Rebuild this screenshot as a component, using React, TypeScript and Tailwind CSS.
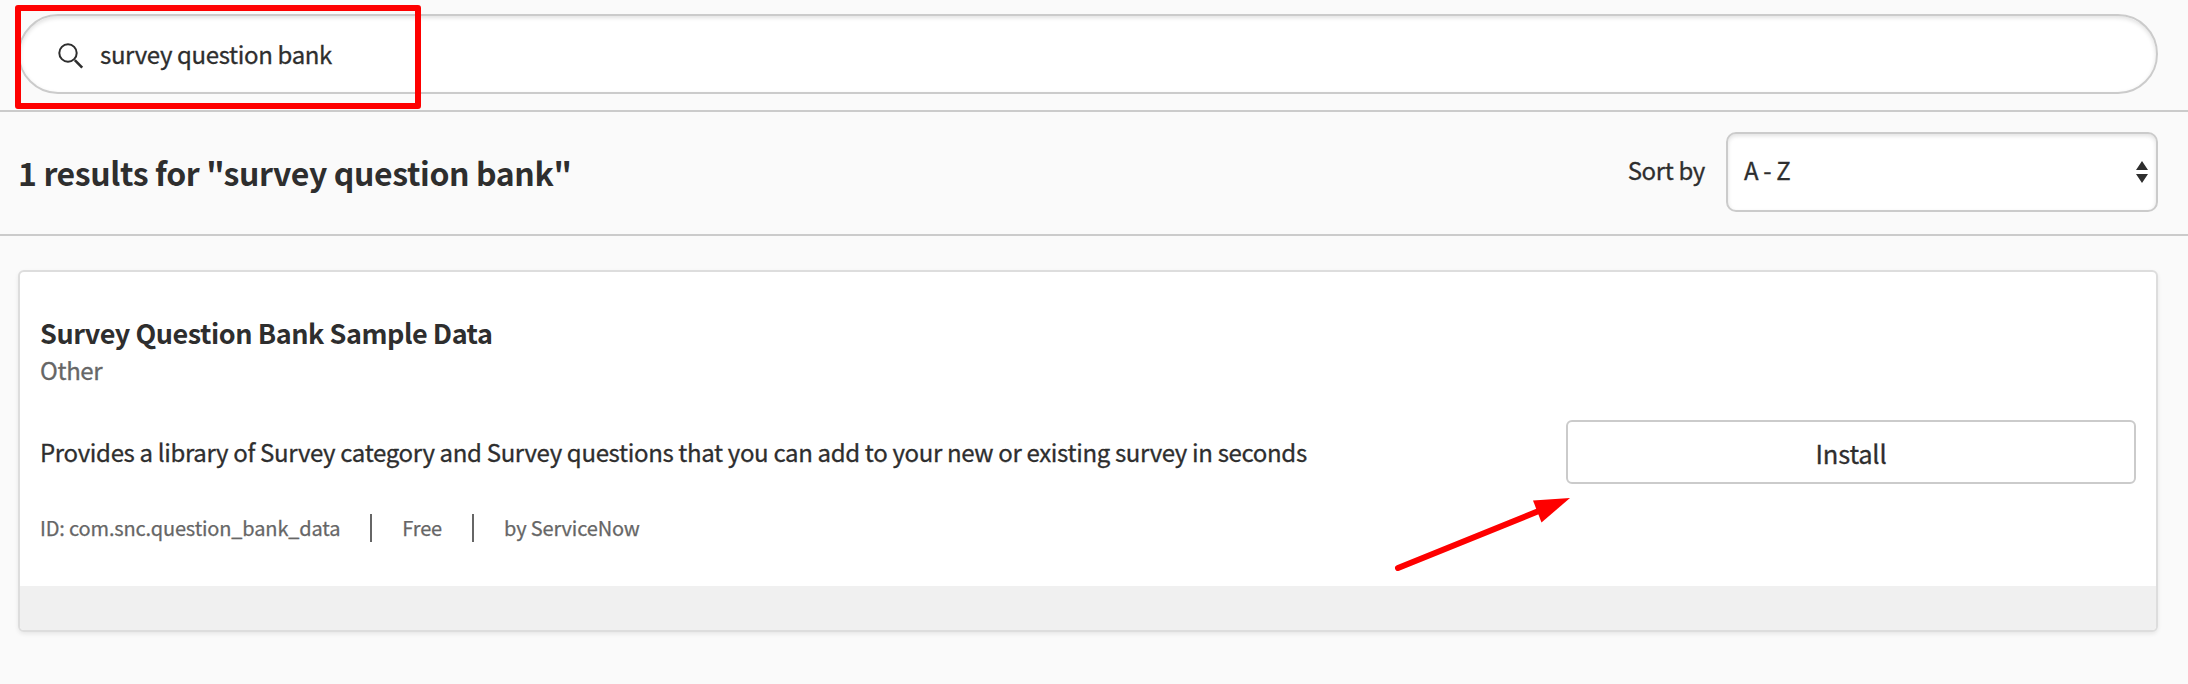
import { useState } from 'react'

interface Plugin {
  id: string
  name: string
  category: string
  description: string
  price: string
  vendor: string
}

const plugins: Plugin[] = [
  {
    id: 'com.snc.question_bank_data',
    name: 'Survey Question Bank Sample Data',
    category: 'Other',
    description: 'Provides a library of Survey category and Survey questions that you can add to your new or existing survey in seconds',
    price: 'Free',
    vendor: 'ServiceNow',
  },
]

function SearchIcon() {
  return (
    <svg className="mt-1 w-[26px] h-[26px] shrink-0" viewBox="0 0 26 26" fill="none" stroke="#2e2e2e">
      <circle cx="10" cy="10" r="8.7" strokeWidth="2" />
      <path d="M16.8 17.2 24.2 24.6" strokeWidth="2.6" />
    </svg>
  )
}

function PluginCard({ plugin }: { plugin: Plugin }) {
  return (
    <div className="relative ml-[18px] mr-[30px] mt-[34px] rounded-md border-2 border-[#dddddd] bg-white shadow-[0_2px_4px_rgba(0,0,0,0.08)]">
      <div className="h-[314px] pl-5 pr-5 pt-10">
        <h2 className="text-[27px] leading-[41px] tracking-[-0.46px] font-bold">{plugin.name}</h2>
        <p className="-mt-px text-[24px] leading-[36px] tracking-[-0.35px] text-[#666666] [-webkit-text-stroke:0.3px]">{plugin.category}</p>
        <div className="mt-8 flex h-16 items-center justify-between">
          <p className="text-[24px] leading-[36px] tracking-[-0.34px] whitespace-nowrap [-webkit-text-stroke:0.3px]">{plugin.description}</p>
          <button className="h-16 w-[570px] rounded-md border-2 border-[#cbcbcb] bg-white pt-0.5 text-[25.5px] leading-[36px] tracking-[-0.2px] [-webkit-text-stroke:0.3px]">
            Install
          </button>
        </div>
        <div className="mt-[30px] flex h-7 items-center text-[20px] leading-[28px] tracking-[-0.16px] text-[#666666] [-webkit-text-stroke:0.25px]">
          <span>ID: {plugin.id}</span>
          <span className="mx-[30px] h-7 w-0.5 bg-[#666666]" />
          <span>{plugin.price}</span>
          <span className="mx-[30px] h-7 w-0.5 bg-[#666666]" />
          <span>by {plugin.vendor}</span>
        </div>
      </div>
      <div className="h-11 rounded-b bg-[#f0f0f0]" />
      {/* Pointer to the install button */}
      <svg className="absolute left-[1370px] top-[218px] h-[90px] w-[190px]" viewBox="1390 490 190 90">
        <path d="M1398 568 1540 510.500" stroke="#fe0000" strokeWidth="6" strokeLinecap="round" />
        <path d="M1570 498 1533 500.500 1541.500 522.500Z" fill="#fe0000" />
      </svg>
    </div>
  )
}

export default function App() {
  const [query, setQuery] = useState('survey question bank')

  return (
    <div className="h-[684px] w-[2188px] overflow-hidden bg-[#fafafa] font-['Noto_Sans_CJK_SC','Noto_Sans',sans-serif] text-[#2e2e2e]">
      <header className="relative h-28 border-b-2 border-[#cbcbcb] pl-[18px] pr-[30px] pt-3.5">
        <div className="flex h-20 items-center rounded-full border-2 border-[#cbcbcb] bg-white pl-[38px] shadow-[inset_0_2px_4px_rgba(0,0,0,0.12)]">
          <SearchIcon />
          <input
            value={query}
            onChange={e => setQuery(e.target.value)}
            className="mb-0.5 ml-4 h-10 flex-1 bg-transparent text-[24px] tracking-[-0.35px] outline-none [-webkit-text-stroke:0.3px]"
          />
        </div>
        {/* Search highlight */}
        <div className="absolute left-[15px] top-[5px] h-[104px] w-[406px] rounded-[3px] border-[6px] border-[#fe0000]" />
      </header>

      <section className="flex h-[124px] items-start justify-between border-b-2 border-[#cbcbcb] pl-[18px] pr-[30px] pt-5">
        <h1 className="text-[32px] leading-[81px] tracking-[-0.38px] font-bold">
          {plugins.length} results for "{query}"
        </h1>
        <div className="flex">
          <span className="mr-[21px] text-[24px] leading-[76px] tracking-[-0.35px] [-webkit-text-stroke:0.3px]">Sort by</span>
          <div className="flex h-20 w-[432px] items-start justify-between rounded-[10px] border-2 border-[#cbcbcb] bg-white pl-4 pr-2 shadow-[inset_0_2px_4px_rgba(0,0,0,0.12)]">
            <span className="text-[24px] leading-[72px] tracking-[-0.35px] [-webkit-text-stroke:0.3px]">A - Z</span>
            <svg className="mt-[27px] h-[22px] w-3" viewBox="0 0 12 22" fill="#2e2e2e">
              <path d="M6 0 12 9H0ZM0 13H12L6 22Z" />
            </svg>
          </div>
        </div>
      </section>

      {plugins.map(plugin => (
        <PluginCard key={plugin.id} plugin={plugin} />
      ))}
    </div>
  )
}
